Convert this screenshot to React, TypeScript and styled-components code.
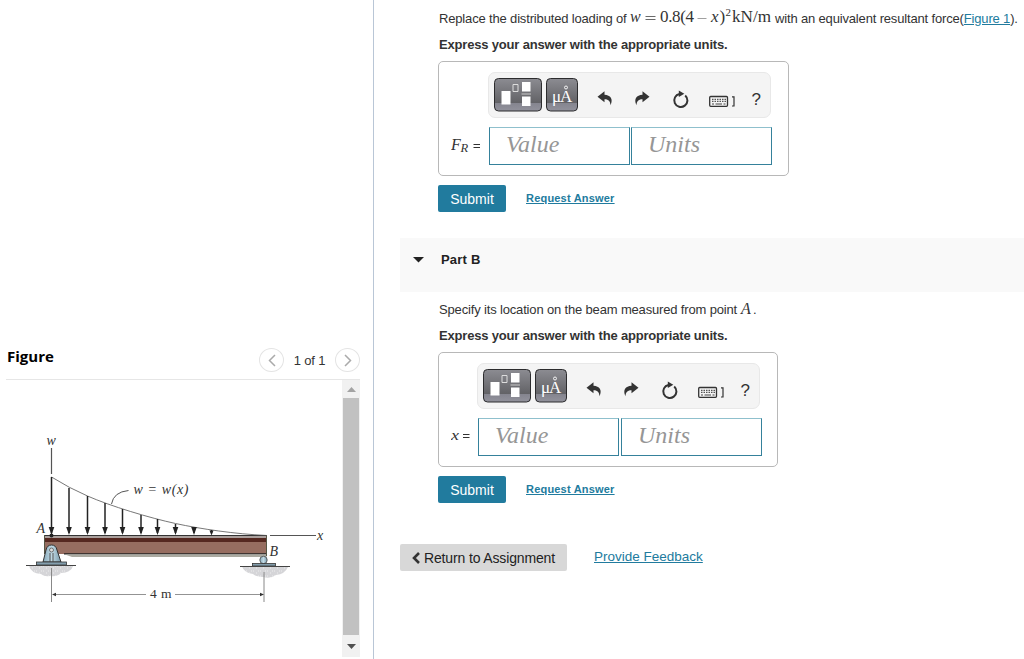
import type { ReactNode } from "react";
import styled, { createGlobalStyle } from "styled-components";

const GlobalStyle = createGlobalStyle`
  * {
    box-sizing: border-box;
  }

  body {
    margin: 0;
    background: #fff;
    color: #333;
    font-family: "Liberation Sans", Arial, sans-serif;
    font-size: 13px;
    overflow: hidden;
  }

  svg {
    display: block;
    flex-shrink: 0;
    letter-spacing: 0;
  }
`;

const Page = styled.div`
  display: flex;
  height: 659px;
  width: 1024px;
  overflow: hidden;
`;

const FigurePane = styled.aside`
  display: flex;
  flex-direction: column;
  flex-shrink: 0;
  width: 374px;
  padding: 347px 13px 2px 6px;
  border-right: 1px solid #b9c6d6;
`;

const FigureHeader = styled.div`
  display: flex;
  align-items: flex-start;
  flex-shrink: 0;
  height: 33px;
  border-bottom: 1px solid #e6e6e6;
`;

const FigureTitle = styled.h2`
  flex: 1;
  margin: 0;
  padding-left: 1px;
  color: #000;
  font-family: "Open Sans", "Noto Sans", sans-serif;
  font-size: 15px;
  line-height: 19px;
  font-weight: 700;
`;

const PagerButton = styled.button`
  display: flex;
  align-items: center;
  justify-content: center;
  width: 25px;
  height: 24px;
  margin-top: 1px;
  padding: 0;
  border: 1px solid #e4e4e4;
  border-radius: 50%;
  background: #fff;
`;

const PagerText = styled.span`
  width: 51px;
  text-align: center;
  line-height: 28px;
  font-size: 13px;
  letter-spacing: -0.15px;
`;

const FigureBody = styled.div`
  display: flex;
  flex: 1;
`;

const FigureCanvas = styled.div`
  flex: 1;
  min-width: 0;
`;

const Scrollbar = styled.div`
  display: flex;
  flex-direction: column;
  align-items: center;
  width: 18px;
  background: #f1f1f1;
`;

const ScrollArrow = styled.div<{ $size: number }>`
  display: flex;
  align-items: center;
  justify-content: center;
  height: ${({ $size }) => $size}px;
`;

const ScrollThumb = styled.div`
  flex: 1;
  width: 16px;
  background: #c1c1c1;
`;

const Main = styled.main`
  flex: 1;
  min-width: 0;
  display: flex;
  flex-direction: column;
  padding-left: 26px;
`;

const Part = styled.section<{ $top: number }>`
  display: flex;
  flex-direction: column;
  align-items: flex-start;
  padding: ${({ $top }) => $top}px 0 0 38px;
`;

const Prompt = styled.div`
  display: flex;
  align-items: center;
  height: 26px;
  padding-left: 1px;
  white-space: pre;
  font-size: 13px;
  letter-spacing: -0.16px;
`;

const Instruction = styled.div`
  height: 27px;
  margin-bottom: 3px;
  padding-left: 1px;
  line-height: 27px;
  font-size: 13px;
  font-weight: 700;
  letter-spacing: -0.18px;
`;

const AnswerBox = styled.div<{ $label: number }>`
  display: grid;
  grid-template-columns: ${({ $label }) => $label}px 283px;
  grid-template-rows: 46px 38px;
  row-gap: 8px;
  align-items: center;
  height: 115px;
  padding: 10px 17px 12px 0;
  border: 1px solid #b8b8b8;
  border-radius: 5px;
`;

const Toolbar = styled.div`
  grid-column: 2;
  display: flex;
  align-items: flex-start;
  height: 46px;
  padding: 5px 0 0 5px;
  border: 1px solid #e8e8e8;
  border-radius: 7px;
  background: #f4f4f4;
`;

const ToolGroup = styled.div`
  display: flex;
  gap: 4px;
`;

const Label = styled.div`
  padding-left: 12px;
`;

const Inputs = styled.div<{ $gap: number }>`
  display: flex;
  gap: ${({ $gap }) => $gap}px;
  padding: 1px 0 0 1px;
`;

const Field = styled.input`
  width: 141px;
  height: 38px;
  padding: 0 0 2px 16px;
  border: 1px solid #35819b;
  border-top-color: #8fc0cd;
  border-radius: 0;
  background: #fff;
  font: italic 24px "Liberation Serif", "Times New Roman", serif;

  &::placeholder {
    color: #969696;
    opacity: 1;
  }
`;

const Actions = styled.div`
  display: flex;
  align-items: center;
  gap: 20px;
  padding-top: 9px;
`;

const Submit = styled.button`
  width: 68px;
  height: 27px;
  padding: 0;
  border: 0;
  border-radius: 2px;
  background: #217b9e;
  color: #fff;
  font: 14px "Liberation Sans", Arial, sans-serif;
`;

const Link = styled.a<{ $size?: number }>`
  color: #217b9e;
  font-size: ${({ $size = 13 }) => $size}px;
  text-decoration: underline;
  text-underline-offset: 1px;
`;

const RequestLink = styled(Link)`
  padding-bottom: 2px;
  font-weight: 700;
  letter-spacing: 0.2px;
`;

const PartBar = styled.div`
  display: flex;
  align-items: flex-start;
  gap: 17px;
  height: 54px;
  margin-top: 26px;
  padding: 14px 0 0 13px;
  background: #f9f9f9;
  color: #222;
  font-size: 13px;
  font-weight: 700;
  line-height: 16px;
  letter-spacing: 0.2px;

  svg {
    margin-top: 5px;
  }
`;

const Footer = styled.div`
  display: flex;
  align-items: center;
  gap: 27px;
  margin-top: 41px;
`;

const ReturnButton = styled.button`
  display: flex;
  align-items: center;
  justify-content: center;
  gap: 4px;
  width: 167px;
  height: 27px;
  padding: 0;
  border: 0;
  border-radius: 2px;
  background: #d8d8d8;
  color: #222;
  font: 14px "Liberation Sans", Arial, sans-serif;
  letter-spacing: -0.14px;
`;

const FeedbackLink = styled.span`
  padding-bottom: 3px;
`;

const MATH = '"Liberation Serif", "Times New Roman", serif';

const PromptMath = () => (
  <svg width="145" height="26" fontFamily={MATH} fontSize="17" fill="#333">
    <text x="0" y="17" fontStyle="italic" fontSize="16" textLength="10">w</text>
    <path d="M15.500 11.500h10M15.500 14.500h10" stroke="#444" strokeWidth=".8" />
    <text x="30" y="17" textLength="34">0.8(4</text>
    <path d="M67.500 13.500h9" stroke="#888" strokeWidth=".8" />
    <text x="81" y="17" fontStyle="italic" textLength="9">x</text>
    <text x="89.500" y="17">)</text>
    <text x="95.500" y="11" fontSize="11">2</text>
    <text x="102" y="17" fontSize="16" textLength="39" lengthAdjust="spacingAndGlyphs">kN/m</text>
  </svg>
);

const PointMath = () => (
  <svg width="16" height="26" fontFamily={MATH}>
    <text x="4" y="18" fontStyle="italic" fontSize="16" fill="#333">A</text>
  </svg>
);

const TemplateIcon = ({ id }: { id: string }) => (
  <svg width="48" height="34">
    <defs>
      <linearGradient id={id} x2="0" y2="1">
        <stop offset="0" stopColor="#8c8c92" />
        <stop offset=".75" stopColor="#626266" />
        <stop offset=".76" stopColor="#85858f" />
        <stop offset="1" stopColor="#92929c" />
      </linearGradient>
    </defs>
    <rect x=".5" y=".5" width="47" height="32.500" rx="4" fill={`url(#${id})`} stroke="#2c2c2e" />
    <path d="M7.500 13h9v13.500h-9zM28 4h8.500v9.500H28zM28 18.500h8.500v9.500H28z" fill="#fff" />
    <path d="M19 6.500h5v7h-5z" fill="none" stroke="#ddd" />
    <path d="M27.500 16h9.500" stroke="#ccc" />
  </svg>
);

const UnitsIcon = ({ id }: { id: string }) => (
  <svg width="32" height="34" fontFamily={MATH} fill="#fff">
    <rect x=".5" y=".5" width="31" height="32.500" rx="4" fill={`url(#${id})`} stroke="#2c2c2e" />
    <text x="6" y="24" fontSize="17">μ</text>
    <text x="14" y="24" fontSize="17">A</text>
    <circle cx="20" cy="9.500" r="1.500" fill="none" stroke="#fff" strokeWidth=".9" />
  </svg>
);

const ToolIcons = () => (
  <svg width="191" height="36" fill="#333">
    <path d="M19.500 18.700l7-5.500v3.500c6 .2 9 4.500 6 10.500-.2-3.500-1.500-6-6-6v3z" />
    <path d="M71.500 18.700l-7-5.500v3.500c-6 .2-9 4.500-6 10.500 .2-3.500 1.500-6 6-6v3z" />
    <path d="M101.500 15.900a6.600 6.600 0 1 0 5.700 1.500" fill="none" stroke="#333" strokeWidth="2" />
    <path d="M100.800 12.500l5.500 3.300-5.500 3.200z" />
    <rect x="131.700" y="18.500" width="17.800" height="9.800" rx="1" fill="none" stroke="#333" strokeWidth="1.300" />
    <path d="M134 21.300h14M134 23.400h14" stroke="#555" strokeWidth="1.300" strokeDasharray="1.500 1" />
    <path d="M134 26h2M137.500 26h6.500M145.500 26h2" stroke="#444" />
    <path d="M154 18.800h2v9.200h-2" fill="none" stroke="#333" strokeWidth="1.200" />
    <text x="173.500" y="27" fontFamily="Liberation Sans, Arial, sans-serif" fontSize="17">?</text>
  </svg>
);

const LabelFr = () => (
  <svg width="34" height="24" fontFamily={MATH} fill="#333">
    <text x="0" y="17" fontSize="16" fontStyle="italic">F</text>
    <text x="9.500" y="19" fontSize="12.500" fontStyle="italic">R</text>
    <path d="M22.500 11.500h6.500M22.500 14.500h6.500" stroke="#333" strokeWidth="1.200" />
  </svg>
);

const LabelX = () => (
  <svg width="24" height="24" fontFamily={MATH} fill="#333">
    <text
      x="0"
      y="15.500"
      fontSize="15"
      fontStyle="italic"
      textLength="8"
      lengthAdjust="spacingAndGlyphs"
    >
      x
    </text>
    <path d="M12 10.500h6.500M12 13.500h6.500" stroke="#333" strokeWidth="1.200" />
  </svg>
);

interface AnswerProps {
  id: string;
  labelWidth: number;
  label: ReactNode;
  gap: number;
}

const Answer = ({ id, labelWidth, label, gap }: AnswerProps) => (
  <>
    <AnswerBox $label={labelWidth}>
      <Toolbar>
        <ToolGroup>
          <TemplateIcon id={id} />
          <UnitsIcon id={id} />
        </ToolGroup>
        <ToolIcons />
      </Toolbar>
      <Label>{label}</Label>
      <Inputs $gap={gap}>
        <Field placeholder="Value" />
        <Field placeholder="Units" />
      </Inputs>
    </AnswerBox>
    <Actions>
      <Submit>Submit</Submit>
      <RequestLink $size={11}>Request Answer</RequestLink>
    </Actions>
  </>
);

// x position and top of each load arrow along the beam
const loads = [
  [51.5, 477],
  [69, 488],
  [87.5, 496],
  [105, 503],
  [122.5, 509],
  [141, 515],
  [157.5, 519],
  [175.5, 524],
  [194, 527],
  [211.5, 530],
];

const BeamDrawing = () => (
  <svg width="335" height="276" viewBox="6 380 335 276" fontFamily={MATH} fill="#333">
    <defs>
      <linearGradient id="steel">
        <stop offset="0" stopColor="#86a9ba" />
        <stop offset=".5" stopColor="#c2dae5" />
        <stop offset="1" stopColor="#7699aa" />
      </linearGradient>
      <pattern id="ground" width="7" height="5" patternUnits="userSpaceOnUse">
        <rect width="7" height="5" fill="#d5d5d8" />
        <path d="M1 1h1M4 3h1M6 1h1" stroke="#eee" />
      </pattern>
    </defs>

    <path d="M29 566h44q-2 7-12 7-4 4-11 3-6 1-9-2-10-1-12-8z" fill="url(#ground)" />
    <path d="M242 567h46q-3 7-12 8-5 4-13 2-7 0-10-3-8-1-11-7z" fill="url(#ground)" />

    <rect x="44.500" y="535.500" width="222" height="3" fill="#aaa09d" />
    <path d="M44 535.500h223" stroke="#333" />
    <rect x="44.500" y="538" width="222" height="4" fill="#552820" />
    <rect x="44.500" y="542" width="222" height="12" fill="#966d60" />
    <path d="M64 553.800h202.500" stroke="#222" strokeWidth="1.200" />
    <path d="M65 554.500h201.500v2.500H72z" fill="#aaa9a0" />
    <path d="M44.500 535v19M266.500 535v21" stroke="#554" fill="none" />

    <path d="M43 562l3-12q1-5 5.500-5t5.500 5l4 12z" fill="url(#steel)" stroke="#333" />
    <circle cx="51.500" cy="550" r="2" fill="#ddd" stroke="#555" strokeWidth=".8" />
    <path d="M50 553v9M53 553v9" stroke="#555" />
    <rect x="36.500" y="562" width="30" height="3" fill="#829dac" stroke="#333" strokeWidth=".8" />
    <path d="M26 565.500h50" stroke="#444" />
    <circle cx="263.500" cy="560" r="3.700" fill="url(#steel)" stroke="#444" strokeWidth=".8" />
    <rect x="252.500" y="563.500" width="23" height="2.500" fill="#829dac" stroke="#333" strokeWidth=".8" />
    <path d="M240 566.500h50" stroke="#444" />

    <path d="M51.500 448v26" stroke="#555" strokeWidth="1.200" />
    <path
      d="M51.500 477Q69 488 87.500 496C110 506 150 518 175.500 523.500S235 534 267 535.500"
      fill="none"
      stroke="#555"
      strokeWidth=".8"
    />
    {loads.map(([x, top]) => (
      <g key={x}>
        <path d={`M${x} ${top}V533`} stroke="#222" strokeWidth="1.500" />
        <path
          d={top > 529 ? `M${x - 2} 530.500h4l-2 5z` : `M${x - 2.8} 527h5.600l-2.800 8z`}
          fill="#222"
        />
      </g>
    ))}
    <circle cx="51.500" cy="535.500" r="2" fill="#222" />
    <path d="M111.500 504q2-12 17-13.500M270 535.500h46" fill="none" stroke="#555" />

    <path d="M51.500 568v34M264 572v30" stroke="#888" />
    <path d="M53 594.500h93M175 594.500h88" stroke="#777" strokeWidth=".8" />
    <path d="M52 594.500l4-1.800v3.600zM264 594.500l-4-1.800v3.600z" />

    <g fontSize="14" fontStyle="italic">
      <text x="46.500" y="445">w</text>
      <text x="36.500" y="533">A</text>
      <text x="269.500" y="556">B</text>
      <text x="317" y="540">x</text>
      <text x="133.500" y="494" textLength="55">w = w(x)</text>
    </g>
    <text x="150" y="598" fontSize="13.500" textLength="21.500">4 m</text>
  </svg>
);

const App = () => {
  return (
    <>
      <GlobalStyle />
      <Page>
        <FigurePane>
          <FigureHeader>
            <FigureTitle>Figure</FigureTitle>
            <PagerButton>
              <svg width="8" height="13" fill="none" stroke="#aaa" strokeWidth="1.500">
                <path d="M7 1L1.500 6.500 7 12" />
              </svg>
            </PagerButton>
            <PagerText>1 of 1</PagerText>
            <PagerButton>
              <svg width="8" height="13" fill="none" stroke="#aaa" strokeWidth="1.500">
                <path d="M1 1l5.500 5.500L1 12" />
              </svg>
            </PagerButton>
          </FigureHeader>
          <FigureBody>
            <FigureCanvas>
              <BeamDrawing />
            </FigureCanvas>
            <Scrollbar>
              <ScrollArrow $size={18}>
                <svg width="9" height="5">
                  <path d="M0 5L4.500 0 9 5z" fill="#a3a3a3" />
                </svg>
              </ScrollArrow>
              <ScrollThumb />
              <ScrollArrow $size={22}>
                <svg width="9" height="5">
                  <path d="M0 0h9L4.500 5z" fill="#505050" />
                </svg>
              </ScrollArrow>
            </Scrollbar>
          </FigureBody>
        </FigurePane>

        <Main>
          <Part $top={5}>
            <Prompt>
              {"Replace the distributed loading of "}
              <PromptMath />
              {"with an equivalent resultant force("}
              <Link>Figure 1</Link>).
            </Prompt>
            <Instruction>Express your answer with the appropriate units.</Instruction>
            <Answer id="shade-a" labelWidth={49} label={<LabelFr />} gap={1} />
          </Part>

          <PartBar>
            <svg width="11" height="6">
              <path d="M0 0h11L5.500 5.500z" fill="#222" />
            </svg>
            Part B
          </PartBar>

          <Part $top={4}>
            <Prompt>
              Specify its location on the beam measured from point
              <PointMath />.
            </Prompt>
            <Instruction>Express your answer with the appropriate units.</Instruction>
            <Answer id="shade-b" labelWidth={38} label={<LabelX />} gap={2} />
          </Part>

          <Footer>
            <ReturnButton>
              <svg width="8" height="12" fill="none" stroke="#333" strokeWidth="2.600">
                <path d="M7 1L2 6l5 5" />
              </svg>
              Return to Assignment
            </ReturnButton>
            <FeedbackLink>
              <Link $size={13.5}>Provide Feedback</Link>
            </FeedbackLink>
          </Footer>
        </Main>
      </Page>
    </>
  );
};

export default App;
